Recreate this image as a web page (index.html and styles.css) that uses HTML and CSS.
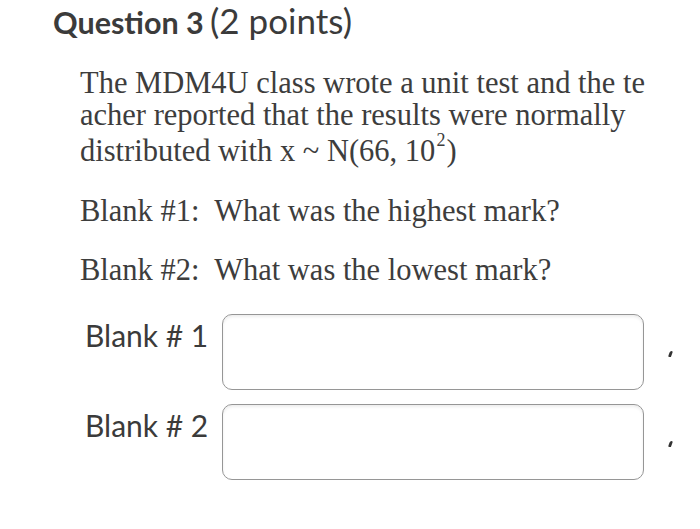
FILE: index.html
```html
<!DOCTYPE html>
<html>
<head>
<meta charset="utf-8">
<link rel="stylesheet" href="styles.css">
</head>
<body>
<div class="question">
  <h2 class="q-title"><span class="q-name">Question 3</span> <span class="q-points">(2 points)</span></h2>
  <div class="q-body">
    <p class="q-text">The MDM4U class wrote a unit test and the te acher reported that the results were normally distributed with x ~ N(66, 10<sup>2</sup>)</p>
    <p class="q-blank blank-1">Blank #1:&nbsp; What was the highest mark?</p>
    <p class="q-blank blank-2">Blank #2:&nbsp; What was the lowest mark?</p>
  </div>
  <div class="answers">
    <div class="answer-row">
      <label class="answer-label">Blank # 1</label>
      <div class="answer-box"></div>
      <span class="edge-mark"></span>
    </div>
    <div class="answer-row">
      <label class="answer-label">Blank # 2</label>
      <div class="answer-box"></div>
      <span class="edge-mark"></span>
    </div>
  </div>
</div>
</body>
</html>
```
FILE: styles.css
```css
html, body {
  margin: 0;
  padding: 0;
  background: #ffffff;
}
body {
  width: 700px;
  height: 529px;
  overflow: hidden;
}
.question {
  padding: 0 0 0 53px;
}
.q-title {
  margin: 0;
  font-family: Lato, "Liberation Sans", sans-serif;
  font-weight: normal;
  color: #3b3b3b;
  line-height: 40px;
  white-space: nowrap;
}
.q-name {
  font-weight: 700;
  font-size: 30.5px;
}
.q-points {
  font-size: 35px;
}
.q-body {
  padding: 22px 0 0 27px;
  width: 585px;
  font-family: "Liberation Serif", "Times New Roman", serif;
  font-size: 30.5px;
  color: #3d3d3d;
}
.q-text {
  margin: 0;
  line-height: 32px;
}
.q-text sup {
  display: inline-block;
  font-size: 18px;
  vertical-align: 15px;
  line-height: 18px;
  margin: 0 1px 0 1px;
}
.q-blank {
  margin: 0;
  line-height: 32px;
}
.blank-1 {
  margin-top: 28px;
}
.blank-2 {
  margin-top: 27px;
}
.answers {
  padding: 28px 0 0 32px;
  display: flex;
  flex-direction: column;
  gap: 14px;
}
.answer-row {
  display: flex;
  align-items: flex-start;
}
.answer-label {
  width: 137px;
  font-family: Lato, "Liberation Sans", sans-serif;
  font-size: 30px;
  color: #3b3b3b;
  line-height: 36px;
  padding-top: 3px;
}
.answer-box {
  box-sizing: border-box;
  width: 422px;
  height: 76px;
  border: 1.5px solid #969696;
  border-radius: 10px;
  box-shadow: inset 0 2px 3px rgba(0,0,0,0.07);
  background: #fff;
}
.edge-mark {
  width: 3px;
  height: 6px;
  margin: 37px 0 0 25px;
  background: #333;
  border-radius: 2px 2px 0 2px;
  transform: skewX(-20deg);
}
```
